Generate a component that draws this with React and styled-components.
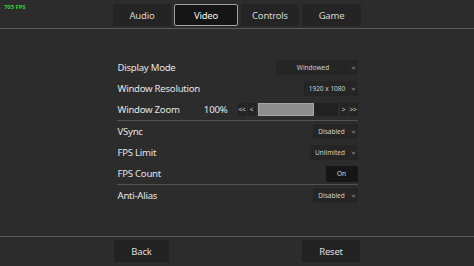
import React from 'react';
import styled, { createGlobalStyle } from 'styled-components';

const GlobalStyle = createGlobalStyle`
  html, body {
    margin: 0;
    padding: 0;
    background: #2c2c2c;
    overflow: hidden;
  }
  body {
    font-family: "Noto Sans", "Open Sans", sans-serif;
  }
`;

const Screen = styled.div`
  position: relative;
  width: 474px;
  height: 266px;
  display: flex;
  flex-direction: column;
  background: #2c2c2c;
  color: #e2e2e2;
`;

/* frame counter lies over the page */
const Fps = styled.div`
  position: absolute;
  top: 3px;
  left: 4px;
  font-size: 6px;
  font-weight: 700;
  color: #2fd02f;
  letter-spacing: -0.1px;
`;

const TabBar = styled.div`
  height: 29px;
  box-sizing: border-box;
  padding-top: 4px;
  display: flex;
  justify-content: center;
  align-items: flex-start;
  gap: 3px;
  border-bottom: 1px solid #5a5a5a;
`;

const Tab = styled.div`
  width: ${p => p.w}px;
  height: 22px;
  box-sizing: border-box;
  display: flex;
  align-items: center;
  justify-content: center;
  font-size: 9.5px;
  letter-spacing: -0.2px;
  color: ${p => (p.active ? '#f4f4f4' : '#d6d6d6')};
  background: ${p => (p.active ? '#151515' : '#242424')};
  border: 1px solid ${p => (p.active ? '#a0a0a0' : 'transparent')};
  border-radius: 2px;
`;

const Content = styled.div`
  flex: 1;
  display: flex;
  flex-direction: column;
  align-items: center;
  padding-top: 28px;
`;

const Panel = styled.div`
  width: 241px;
  display: flex;
  flex-direction: column;
`;

const Row = styled.div`
  height: 21px;
  display: flex;
  align-items: center;
  padding-left: 1px;
`;

const Label = styled.div`
  flex: 1;
  font-size: 9.6px;
  letter-spacing: -0.25px;
  color: #e4e4e4;
`;

const Separator = styled.div`
  height: 1px;
  background: #545454;
`;

const Select = styled.div`
  width: ${p => p.w}px;
  height: 15px;
  box-sizing: border-box;
  display: flex;
  align-items: center;
  background: #252525;
  font-size: 6.5px;
  color: #cfcfcf;
  padding-right: 2px;
`;

const SelectText = styled.span`
  flex: 1;
  text-align: center;
`;

const Chevron = styled.svg`
  width: 5px;
  height: 4px;
`;

const ToggleButton = styled.div`
  width: 32px;
  height: 16px;
  display: flex;
  align-items: center;
  justify-content: center;
  background: #161616;
  font-size: 6.5px;
  color: #dcdcdc;
`;

const Percent = styled.div`
  font-size: 9.6px;
  letter-spacing: -0.2px;
  color: #e4e4e4;
  margin-right: 10px;
`;

const Zoom = styled.div`
  width: 120px;
  height: 13px;
  display: flex;
  align-items: stretch;
  gap: 1px;
`;

const StepButton = styled.div`
  width: ${p => p.w}px;
  display: flex;
  align-items: center;
  justify-content: center;
  background: #242424;
  font-size: 6.5px;
  color: #cfcfcf;
  letter-spacing: -0.3px;
`;

const Track = styled.div`
  flex: 1;
  margin: 0 1px;
  background: #212121;
  display: flex;
`;

const Fill = styled.div`
  background: #8e8e8e;
  border: 1px solid #a6a6a6;
  box-sizing: border-box;
`;

const Footer = styled.div`
  height: 30px;
  box-sizing: border-box;
  border-top: 1px solid #5a5a5a;
  display: flex;
  justify-content: space-between;
  align-items: flex-start;
  padding: 3px 114px 0;
`;

const FooterButton = styled.div`
  width: ${p => p.w}px;
  height: 22px;
  display: flex;
  align-items: center;
  justify-content: center;
  background: #222222;
  font-size: 9.5px;
  letter-spacing: -0.2px;
  color: #dedede;
`;

const Dropdown = ({ w, children }) => (
  <Select w={w}>
    <SelectText>{children}</SelectText>
    <Chevron viewBox="0 0 5 4">
      <path d="M0.8 1.2 L2.5 2.8 L4.2 1.2" stroke="#bdbdbd" strokeWidth="0.9" fill="none" />
    </Chevron>
  </Select>
);

const zoomFill = 0.71;

export default function App() {
  return (
    <>
      <GlobalStyle />
      <Screen>
        <Fps>705 FPS</Fps>
        <TabBar>
          <Tab w={58}>Audio</Tab>
          <Tab w={64} active>Video</Tab>
          <Tab w={58}>Controls</Tab>
          <Tab w={59}>Game</Tab>
        </TabBar>

        <Content>
          <Panel>
            <Row>
              <Label>Display Mode</Label>
              <Dropdown w={82}>Windowed</Dropdown>
            </Row>
            <Row>
              <Label>Window Resolution</Label>
              <Dropdown w={54}>1920 x 1080</Dropdown>
            </Row>
            <Row>
              <Label>Window Zoom</Label>
              <Percent>100%</Percent>
              <Zoom>
                <StepButton w={9}>&lt;&lt;</StepButton>
                <StepButton w={8}>&lt;</StepButton>
                <Track>
                  <Fill style={{ width: `${zoomFill * 100}%` }} />
                </Track>
                <StepButton w={8}>&gt;</StepButton>
                <StepButton w={9}>&gt;&gt;</StepButton>
              </Zoom>
            </Row>
            <Separator />
            <Row>
              <Label>VSync</Label>
              <Dropdown w={45}>Disabled</Dropdown>
            </Row>
            <Row>
              <Label>FPS Limit</Label>
              <Dropdown w={48}>Unlimited</Dropdown>
            </Row>
            <Row>
              <Label>FPS Count</Label>
              <ToggleButton>On</ToggleButton>
            </Row>
            <Separator />
            <Row>
              <Label>Anti-Alias</Label>
              <Dropdown w={45}>Disabled</Dropdown>
            </Row>
          </Panel>
        </Content>

        <Footer>
          <FooterButton w={55}>Back</FooterButton>
          <FooterButton w={58}>Reset</FooterButton>
        </Footer>
      </Screen>
    </>
  );
}
